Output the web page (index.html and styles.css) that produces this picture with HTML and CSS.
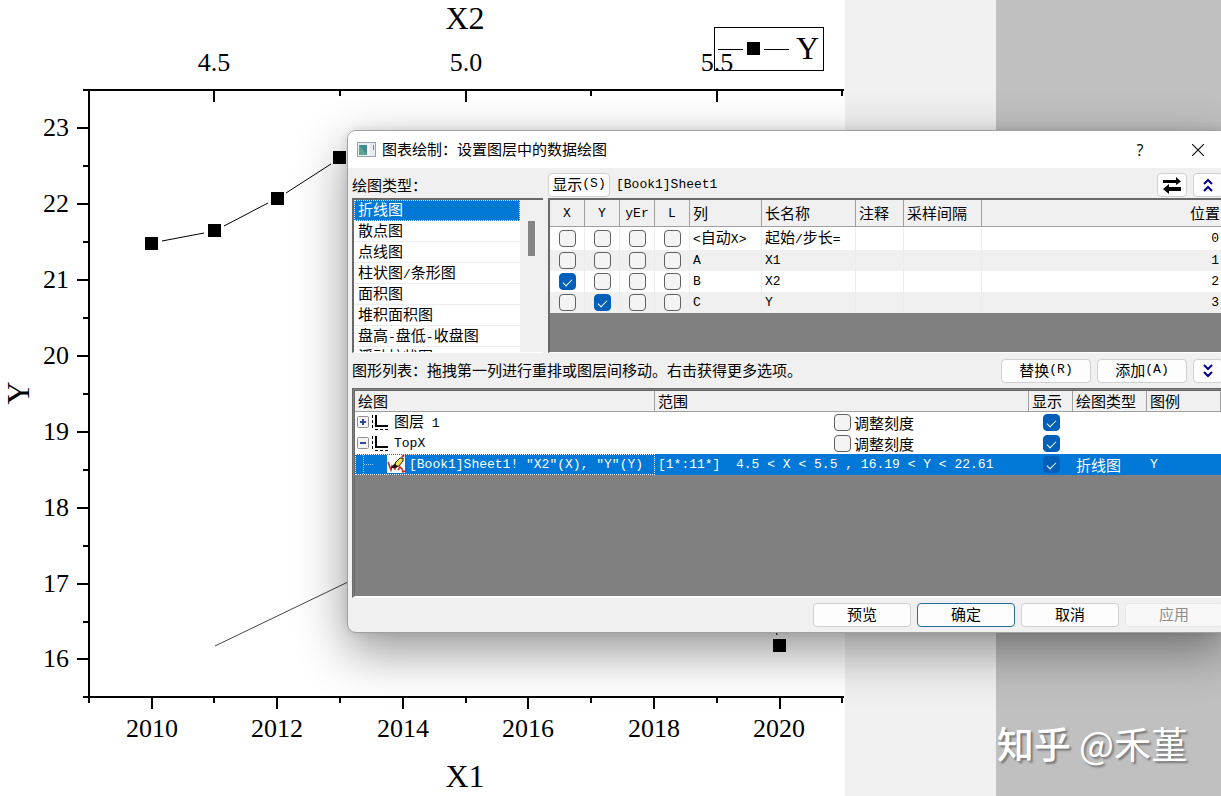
FILE: index.html
```html
<!DOCTYPE html>
<html lang="zh-CN">
<head>
  <meta charset="utf-8">
  <title>图表绘制</title>
  <link rel="stylesheet" href="styles.css">
</head>
<body>
  <div class="workspace">
    <div class="page">
      <svg class="chart" viewBox="0 0 845 796">
        <!-- axes -->
        <path class="axis" d="M89 89V698M83 90H844M83 697H844"/>
        <!-- top ticks -->
        <path class="axis" d="M214 90v12M466 90v12M717 90v12M340 90v6M591 90v6M842 90v6"/>
        <!-- left ticks -->
        <path class="axis" d="M77 128h12M77 204h12M77 280h12M77 356h12M77 432h12M77 508h12M77 584h12M77 659h12"/>
        <path class="axis" d="M83 166h6M83 242h6M83 318h6M83 394h6M83 470h6M83 546h6M83 622h6"/>
        <!-- bottom ticks -->
        <path class="axis" d="M152 697v12M277 697v12M403 697v12M528 697v12M654 697v12M780 697v12"/>
        <path class="axis" d="M89 697v6M214 697v6M340 697v6M466 697v6M591 697v6M717 697v6M842 697v6"/>

        <g class="tick" text-anchor="end">
          <text x="69" y="136">23</text>
          <text x="69" y="212">22</text>
          <text x="69" y="288">21</text>
          <text x="69" y="364">20</text>
          <text x="69" y="440">19</text>
          <text x="69" y="516">18</text>
          <text x="69" y="592">17</text>
          <text x="69" y="667">16</text>
        </g>
        <g class="tick" text-anchor="middle">
          <text x="152" y="737">2010</text>
          <text x="277" y="737">2012</text>
          <text x="403" y="737">2014</text>
          <text x="528" y="737">2016</text>
          <text x="654" y="737">2018</text>
          <text x="779" y="737">2020</text>
          <text x="214" y="71">4.5</text>
          <text x="466" y="71">5.0</text>
          <text x="717" y="71">5.5</text>
        </g>
        <g class="axis-title" text-anchor="middle">
          <text x="465" y="29">X2</text>
          <text x="465" y="787">X1</text>
          <text transform="translate(29 393) rotate(-90)">Y</text>
        </g>

        <!-- series -->
        <path class="line" d="M162 241L204 233M224 226L268 203M286 193L331 164M774 622L777 635"/>
        <path class="line thin" d="M215 646L350 581"/>
        <path class="marker" d="M145 237h13v13h-13zM208 224h13v13h-13zM271 192h13v13h-13zM333 151h13v13h-13zM773 639h13v13h-13z"/>

        <!-- legend -->
        <rect class="line" x="714.500" y="27.500" width="109" height="43"/>
        <path class="line" d="M718 49.500H743M764 49.500H789"/>
        <path class="marker" d="M747 42h13v13h-13z"/>
        <text class="axis-title" x="796" y="59">Y</text>
      </svg>
    </div>
    <div class="margin"></div>
    <div class="outside"></div>
  </div>

  <div class="watermark"><b>知乎</b> @禾堇</div>

  <div class="dialog">
    <div class="titlebar">
      <svg class="app-icon" width="19" height="15" viewBox="0 0 19 15">
        <rect x="0.500" y="0.500" width="18" height="14" fill="#e6eef4" stroke="#9aa4aa"/>
        <rect x="2" y="3" width="8" height="10" fill="#5fa58e"/>
        <path d="M2 3h8v10z" fill="#3f8c93"/>
        <path d="M11 2v11" stroke="#fff" stroke-width="2"/>
        <path d="M16.500 3v5" stroke="#5a93b0"/>
      </svg>
      <span class="title">图表绘制：设置图层中的数据绘图</span>
      <button class="win-btn help" aria-label="帮助">?</button>
      <button class="win-btn" aria-label="关闭">
        <svg width="12" height="12" viewBox="0 0 12 12"><path d="M0 0L12 12M12 0L0 12" stroke="#111" stroke-width="1.200"/></svg>
      </button>
    </div>

    <div class="content">
      <div class="top">
        <div class="types">
          <div class="bar">绘图类型：</div>
          <div class="listbox">
            <ul role="listbox" aria-label="绘图类型">
              <li role="option" aria-selected="true" class="selected">折线图</li>
              <li role="option">散点图</li>
              <li role="option">点线图</li>
              <li role="option">柱状图<span class="en">/</span>条形图</li>
              <li role="option">面积图</li>
              <li role="option">堆积面积图</li>
              <li role="option">盘高<span class="en">-</span>盘低<span class="en">-</span>收盘图</li>
              <li role="option">浮动柱状图</li>
            </ul>
            <div class="scroll"><div class="thumb"></div></div>
          </div>
        </div>

        <div class="data">
          <div class="bar">
            <button class="btn show">显示<span class="en">(S)</span></button>
            <span class="en sheet">[Book1]Sheet1</span>
            <button class="btn small" aria-label="交换">
              <svg width="20" height="18" viewBox="0 0 20 18"><path d="M1 4h13V1l5 4.500-5 3.500V7H1zM19 11H7V8L1 13l6 5v-3h12z"/></svg>
            </button>
            <button class="btn small" aria-label="收起">
              <svg width="12" height="14" viewBox="0 0 12 14"><path class="chevron" d="M2 6L6 2L10 6M2 13L6 9L10 13"/></svg>
            </button>
          </div>
          <div class="grid-box">
            <table class="columns">
              <colgroup>
                <col class="w-check"><col class="w-check"><col class="w-check"><col class="w-check">
                <col class="w-col"><col class="w-long"><col class="w-note"><col class="w-step"><col>
              </colgroup>
              <thead>
                <tr>
                  <th class="en c">X</th><th class="en c">Y</th><th class="en c">yEr</th><th class="en c">L</th>
                  <th>列</th><th>长名称</th><th>注释</th><th>采样间隔</th><th class="r">位置</th>
                </tr>
              </thead>
              <tbody>
                <tr>
                  <td class="c"><input type="checkbox" aria-label="自动 X"></td>
                  <td class="c"><input type="checkbox" aria-label="自动 Y"></td>
                  <td class="c"><input type="checkbox" aria-label="自动 yEr"></td>
                  <td class="c"><input type="checkbox" aria-label="自动 L"></td>
                  <td><span class="en">&lt;</span>自动<span class="en">X&gt;</span></td>
                  <td>起始<span class="en">/</span>步长<span class="en">=</span></td><td></td><td></td><td class="en r">0</td>
                </tr>
                <tr>
                  <td class="c"><input type="checkbox" aria-label="A X"></td>
                  <td class="c"><input type="checkbox" aria-label="A Y"></td>
                  <td class="c"><input type="checkbox" aria-label="A yEr"></td>
                  <td class="c"><input type="checkbox" aria-label="A L"></td>
                  <td class="en">A</td><td class="en">X1</td><td></td><td></td><td class="en r">1</td>
                </tr>
                <tr>
                  <td class="c"><input type="checkbox" aria-label="B X" checked></td>
                  <td class="c"><input type="checkbox" aria-label="B Y"></td>
                  <td class="c"><input type="checkbox" aria-label="B yEr"></td>
                  <td class="c"><input type="checkbox" aria-label="B L"></td>
                  <td class="en">B</td><td class="en">X2</td><td></td><td></td><td class="en r">2</td>
                </tr>
                <tr>
                  <td class="c"><input type="checkbox" aria-label="C X"></td>
                  <td class="c"><input type="checkbox" aria-label="C Y" checked></td>
                  <td class="c"><input type="checkbox" aria-label="C yEr"></td>
                  <td class="c"><input type="checkbox" aria-label="C L"></td>
                  <td class="en">C</td><td class="en">Y</td><td></td><td></td><td class="en r">3</td>
                </tr>
              </tbody>
            </table>
          </div>
        </div>
      </div>

      <div class="mid">
        <span class="hint">图形列表：拖拽第一列进行重排或图层间移动。右击获得更多选项。</span>
        <button class="btn medium">替换<span class="en">(R)</span></button>
        <button class="btn medium">添加<span class="en">(A)</span></button>
        <button class="btn small" aria-label="展开">
          <svg width="12" height="14" viewBox="0 0 12 14"><path class="chevron" d="M2 1L6 5L10 1M2 8L6 12L10 8"/></svg>
        </button>
      </div>

      <div class="grid-box plots-box">
        <table class="plots">
          <colgroup>
            <col class="w-plot"><col class="w-range"><col class="w-show"><col class="w-type"><col class="w-type"><col>
          </colgroup>
          <thead>
            <tr><th>绘图</th><th>范围</th><th>显示</th><th>绘图类型</th><th>图例</th><th></th></tr>
          </thead>
          <tbody>
            <tr>
              <td>
                <div class="node">
                  <svg width="32" height="17" viewBox="0 0 32 17">
                    <rect x="0.500" y="2.500" width="11" height="11" rx="1" fill="#f4f4f4" stroke="#8e8e8e"/>
                    <path d="M3 8h6M6 5v6" stroke="#2c4a96" stroke-width="2"/>
                    <path d="M19 1v11h12" fill="none" stroke="#000" stroke-width="2"/>
                    <path d="M15.500 1v13M18 15.500h13" stroke="#000" stroke-dasharray="3 2"/>
                  </svg>
                  <span>图层<span class="en"> 1</span></span>
                </div>
              </td>
              <td><label class="rescale"><input type="checkbox">调整刻度</label></td>
              <td class="c"><input type="checkbox" aria-label="显示图层 1" checked></td>
              <td></td><td></td><td></td>
            </tr>
            <tr>
              <td>
                <div class="node">
                  <svg width="32" height="17" viewBox="0 0 32 17">
                    <rect x="0.500" y="2.500" width="11" height="11" rx="1" fill="#f4f4f4" stroke="#8e8e8e"/>
                    <path d="M3 8h6" stroke="#2c4a96" stroke-width="2"/>
                    <path d="M19 1v11h12" fill="none" stroke="#000" stroke-width="2"/>
                    <path d="M15.500 1v13M18 15.500h13" stroke="#000" stroke-dasharray="3 2"/>
                  </svg>
                  <span class="en">TopX</span>
                </div>
              </td>
              <td><label class="rescale"><input type="checkbox">调整刻度</label></td>
              <td class="c"><input type="checkbox" aria-label="显示 TopX" checked></td>
              <td></td><td></td><td></td>
            </tr>
            <tr class="selected">
              <td class="focus">
                <div class="node leaf">
                  <svg width="49" height="19" viewBox="0 0 49 19">
                    <path d="M6.500 0v19M7 9.500h10" stroke="#9fd0f5" stroke-dasharray="1 1"/>
                    <rect x="30" y="0" width="18" height="18" fill="#fff"/>
                    <path d="M31 7l3 8 1-4 3 3 2-4" fill="none" stroke="#c81e1e" stroke-width="1.500"/>
                    <path d="M41 15l2-3 2 2 1 3 2-1" fill="none" stroke="#c81e1e" stroke-width="1.500"/>
                    <path d="M38 8l5-5h3v3l-4 5-3 1z" fill="#f0e04a" stroke="#111"/>
                    <path d="M34 13l3-4 4 2-3 2z" fill="#111"/>
                    <path d="M45 2l2-2" stroke="#c81e1e" stroke-width="2"/>
                  </svg>
                  <span class="en">[Book1]Sheet1! "X2"(X), "Y"(Y)</span>
                </div>
              </td>
              <td class="en range">[1*:11*]  4.5 &lt; X &lt; 5.5 , 16.19 &lt; Y &lt; 22.61</td>
              <td class="c"><input type="checkbox" aria-label="显示折线图" checked></td>
              <td>折线图</td><td class="en">Y</td><td></td>
            </tr>
          </tbody>
        </table>
      </div>

      <div class="footer">
        <button class="btn wide">预览</button>
        <button class="btn wide primary">确定</button>
        <button class="btn wide">取消</button>
        <button class="btn wide" disabled>应用</button>
      </div>
    </div>
  </div>
</body>
</html>
```

FILE: styles.css
```css
* {
  box-sizing: border-box;
}

body {
  margin: 0;
  min-height: 100vh;
  position: relative;
  overflow: hidden;
  font-family: "Noto Sans CJK SC", sans-serif;
  font-size: 15px;
  line-height: 20px;
  color: #000;
}

/* graph page behind the dialog */
.workspace {
  display: grid;
  grid-template-columns: 845fr 151fr 225fr;
  min-height: 100vh;
}

.page {
  background: #fff;
}

.margin {
  background: #f0f0f0;
}

.outside {
  background: #c0c0c0;
}

.chart {
  display: block;
  width: 100%;
  font-family: "Liberation Serif", serif;
}

.axis {
  stroke: #000;
  stroke-width: 2;
}

.line {
  fill: none;
  stroke: #000;
  stroke-width: 1;
}

.thin {
  stroke: #444;
}

.tick {
  font-size: 26px;
}

.axis-title {
  font-size: 32px;
}

.watermark {
  position: absolute;
  right: 33px;
  bottom: 29px;
  font-size: 37px;
  line-height: 48px;
  color: #fff;
  text-shadow: 2px 2px 2px #777;
}

.watermark b {
  font-weight: 500;
}

/* dialog window */
.dialog {
  position: absolute;
  left: 347px;
  right: -8px;
  top: 130px;
  background: #f0f0f0;
  border: 1px solid #a0a0a0;
  border-radius: 9px;
  box-shadow: 0 18px 50px rgba(0, 0, 0, 0.42), 0 0 10px rgba(0, 0, 0, 0.1);
  overflow: hidden;
}

.titlebar {
  display: flex;
  align-items: center;
  height: 37px;
  padding-left: 9px;
  background: #fff;
}

.title {
  flex: 1;
  margin-left: 6px;
  padding-bottom: 2px;
}

.win-btn {
  display: flex;
  align-items: center;
  justify-content: center;
  width: 58px;
  height: 36px;
  padding: 0;
  border: none;
  background: none;
}

.win-btn:last-child {
  margin-right: 1px;
}

.help {
  font-family: "Open Sans", sans-serif;
  font-size: 16px;
}

.content {
  padding: 5px 5px 5px 4px;
}

.top {
  display: flex;
  gap: 5px;
}

.types {
  width: 191px;
}

.data {
  flex: 1;
}

.bar,
.mid,
.footer {
  display: flex;
  align-items: center;
  gap: 6px;
  height: 24px;
}

.en {
  font-family: "Liberation Mono", monospace;
  font-size: 13px;
}

.btn {
  display: flex;
  align-items: center;
  justify-content: center;
  height: 24px;
  padding: 0 0 2px;
  font-family: inherit;
  font-size: 15px;
  line-height: 20px;
  color: #000;
  background: #fdfdfd;
  border: 1px solid #d0d0d0;
  border-radius: 4px;
}

.show {
  width: 62px;
}

.small {
  width: 30px;
  padding: 0;
}

.medium {
  width: 90px;
}

.wide {
  width: 98px;
}

.primary {
  border-color: #1f6f9f;
}

.btn:disabled {
  color: #8c8c8c;
  background: #f8f8f8;
  border-color: #e8e8e8;
}

.chevron {
  fill: none;
  stroke: #00008b;
  stroke-width: 2;
}

.sheet,
.hint {
  flex: 1;
}

/* sunken boxes */
.listbox,
.grid-box {
  height: 155px;
  margin-top: 1px;
  border: 2px solid #696969;
  border-right: none;
  border-bottom: 1px solid #fff;
  overflow: hidden;
}

.listbox {
  display: flex;
  background: #f0f0f0;
}

.listbox ul {
  flex: 1;
  margin: 0;
  padding: 0;
  list-style: none;
  background: #fff;
}

.listbox li {
  height: 21px;
  padding-left: 4px;
  line-height: 17px;
  border-bottom: 1px solid #ececec;
}

.listbox li.selected {
  color: #fff;
  background: #0078d7;
  border: 1px dotted #fff;
  padding-left: 3px;
  line-height: 16px;
}

.scroll {
  width: 23px;
  padding: 21px 8px 0;
}

.thumb {
  height: 35px;
  background: #858585;
}

.grid-box {
  background: #808080;
}

table {
  width: 100%;
  table-layout: fixed;
  border-collapse: separate;
  border-spacing: 0;
}

th,
td {
  height: 21px;
  padding: 0 3px 1px;
  line-height: 19px;
  font-weight: normal;
  text-align: left;
  white-space: nowrap;
  overflow: hidden;
}

th {
  background: #f0f0f0;
  border-right: 1px solid #a0a0a0;
  border-bottom: 1px solid #a0a0a0;
}

th:last-child {
  border-right: none;
}

td {
  background: #fff;
}

.c {
  padding: 0;
  text-align: center;
}

.r {
  text-align: right;
}

.columns th {
  height: 27px;
}

.columns td {
  border-right: 1px solid #ececec;
}

.columns tr:nth-child(even) td {
  background: #f0f0f0;
}

.w-check { width: 35px; }
.w-col { width: 72px; }
.w-long { width: 94px; }
.w-note { width: 48px; }
.w-step { width: 78px; }
.w-plot { width: 300px; }
.w-range { width: 374px; }
.w-show { width: 44px; }
.w-type { width: 74px; }

input[type="checkbox"] {
  appearance: none;
  display: grid;
  place-content: center;
  width: 17px;
  height: 17px;
  margin: 0 auto;
  background: #f4f4f4;
  border: 1px solid #606060;
  border-radius: 4px;
}

input[type="checkbox"]:checked {
  background: #005fb8;
  border-color: #005fb8;
}

input[type="checkbox"]:checked::after {
  content: "";
  width: 8px;
  height: 4px;
  border: solid #fff;
  border-width: 0 0 1px 1px;
  transform: rotate(-45deg);
}

.mid {
  margin-top: 6px;
}

.hint {
  padding-bottom: 2px;
}

.plots-box {
  height: 210px;
  margin-top: 5px;
  border-width: 3px 0 2px 3px;
  border-style: double solid solid double;
  border-color: #696969 #696969 #fff #696969;
}

.node {
  display: flex;
  align-items: center;
  height: 20px;
  gap: 5px;
}

.leaf {
  gap: 3px;
  height: 18px;
}

.plots td:first-child {
  padding-left: 2px;
}

.node .en {
  white-space: pre;
}

.rescale {
  display: flex;
  align-items: center;
  gap: 3px;
  padding-left: 176px;
}

.rescale input[type="checkbox"] {
  margin: 0;
}

.range {
  white-space: pre;
}

.plots .selected td {
  color: #fff;
  background: #0078d7;
}

.plots .selected .focus {
  padding: 0 0 0 1px;
  border: 1px dotted #fff;
}

.footer {
  justify-content: flex-end;
  margin-top: 5px;
}
```
